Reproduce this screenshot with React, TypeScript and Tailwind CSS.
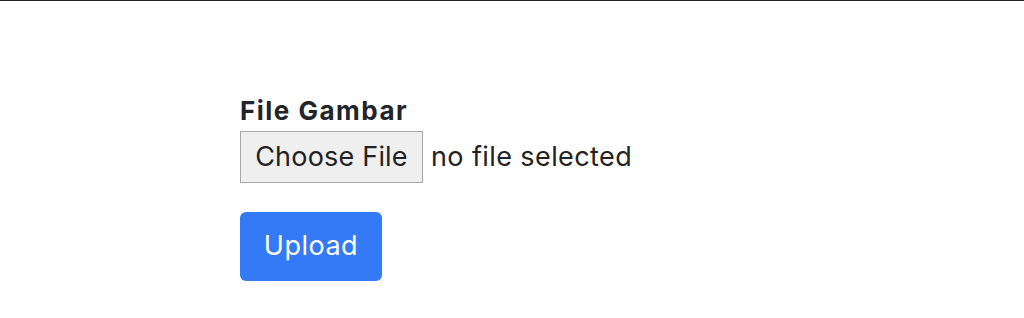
export default function App() {
  return (
    <div className="min-h-[318px] w-full border-t border-[#222] bg-white font-['Inter','Liberation_Sans',Arial,sans-serif] text-[#212529]">
      <form className="pl-[240px] pt-[90px]" onSubmit={(e) => e.preventDefault()}>
        <label className="block text-[26px] font-bold leading-[40px] tracking-[1.5px]">File Gambar</label>
        <div className="flex items-center">
          <input type="file" className="hidden" id="file" />
          <label
            htmlFor="file"
            className="flex h-[52px] w-[183px] items-center justify-center border border-[#a8a8a8] bg-[#efefef] text-[27px] tracking-[0.2px] text-[#222]"
          >
            Choose File
          </label>
          <span className="ml-[8px] text-[27px] tracking-[0.4px] text-[#222]">no file selected</span>
        </div>
        <button
          type="submit"
          className="mt-[29px] h-[69px] w-[142px] rounded-[6px] bg-[#3479f6] text-[27px] tracking-[0.5px] text-white"
        >
          Upload
        </button>
      </form>
    </div>
  );
}
